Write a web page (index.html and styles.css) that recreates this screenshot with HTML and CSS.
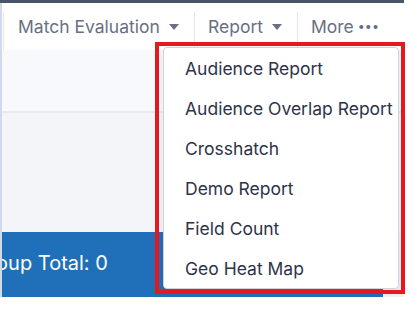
FILE: index.html
```html
<!DOCTYPE html>
<html>
<head>
<meta charset="utf-8">
<link rel="stylesheet" href="styles.css">
</head>
<body>
<div class="app">
  <div class="topbar"></div>
  <div class="frame">
    <nav class="nav">
      <div class="nav-item">Match Evaluation <span class="caret"></span></div>
      <div class="nav-item">Report <span class="caret"></span></div>
      <div class="nav-item">More <span class="dots">•••</span></div>
    </nav>
    <div class="content">
      <div class="panel-top"></div>
      <div class="panel-bottom"></div>
      <div class="total-row">
        <div class="total-bar"><span class="total-text">Group Total: 0</span></div>
        <div class="total-gap"></div>
      </div>
    </div>
  </div>
</div>
<div class="dropdown">
  <div class="dd-item">Audience Report</div>
  <div class="dd-item">Audience Overlap Report</div>
  <div class="dd-item">Crosshatch</div>
  <div class="dd-item">Demo Report</div>
  <div class="dd-item">Field Count</div>
  <div class="dd-item">Geo Heat Map</div>
</div>
<div class="highlight"></div>
</body>
</html>
```

FILE: styles.css
```css
html, body {
  margin: 0;
  padding: 0;
  background: #ffffff;
  width: 417px;
  height: 316px;
  overflow: hidden;
  font-family: Inter, "Noto Sans", sans-serif;
}
.app {
  width: 404px;
}
.topbar {
  height: 3px;
  background: #4a5467;
}
.frame {
  border-left: 2px solid #cfdaeb;
}
.nav {
  display: flex;
  height: 47px;
  background: #ffffff;
  padding-top: 9px;
  box-sizing: border-box;
  padding-left: 1px;
}
.nav-item {
  display: flex;
  align-items: center;
  gap: 9px;
  height: 38px;
  padding: 0 12px 0 13px;
  border-left: 1px solid #e3e6eb;
  color: #687082;
  font-size: 17.5px;
  padding-bottom: 10px;
  box-sizing: border-box;
}
.nav-item:first-child { width: 191px; padding-left: 14px; }
.nav-item:nth-child(2) { width: 103px; }
.caret {
  width: 0;
  height: 0;
  border-left: 5px solid transparent;
  border-right: 5px solid transparent;
  border-top: 6px solid #687082;
  margin-top: 2px;
}
.dots {
  font-size: 12.5px;
  margin-left: -5px;
}
.content {
  background: #f7f9fc;
}
.panel-top {
  height: 61px;
  border-bottom: 2px solid #e6e9ee;
}
.panel-bottom {
  height: 119px;
  background: #f3f5f9;
}
.total-row {
  display: flex;
  height: 65px;
}
.total-bar {
  width: 381px;
  background: #1f6fb9;
  display: flex;
  align-items: center;
  overflow: hidden;
  padding-bottom: 4px;
  box-sizing: border-box;
}
.total-text {
  color: #ffffff;
  font-size: 20px;
  margin-left: -28px;
  white-space: nowrap;
}
.total-gap {
  flex: 1;
  background: #eff0f3;
}
.dropdown {
  position: absolute;
  left: 163px;
  top: 47px;
  width: 236px;
  height: 242px;
  background: #ffffff;
  border: 1px solid #cfd4dc;
  border-radius: 4px;
  box-sizing: border-box;
  box-shadow: 0 2px 6px rgba(0,0,0,0.08);
}
.dd-item {
  height: 40px;
  display: flex;
  align-items: center;
  padding-left: 21px;
  font-size: 17.5px;
  color: #2e3349;
  white-space: nowrap;
}
.highlight {
  position: absolute;
  left: 155px;
  top: 42px;
  width: 250px;
  height: 252px;
  border: 4px solid #e8161e;
  box-sizing: border-box;
}
```
